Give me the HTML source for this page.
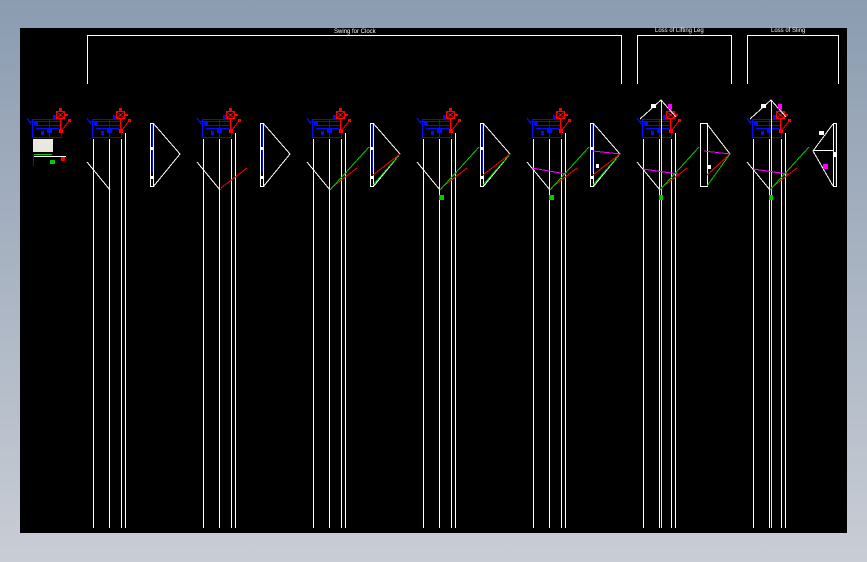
<!DOCTYPE html>
<html><head><meta charset="utf-8"><style>
html,body{margin:0;padding:0;width:867px;height:562px;overflow:hidden;background:linear-gradient(#8b9cb1,#c9cdd5);}
svg{position:absolute;left:0;top:0}
text{font-family:"Liberation Sans",sans-serif;font-size:6px;fill:#fff}
</style></head><body>
<svg width="867" height="562" viewBox="0 0 867 562" shape-rendering="crispEdges">
<rect x="20" y="28" width="827" height="505" fill="#000"/>
<g stroke="#fff" fill="none" stroke-width="1">
<polyline points="87.5,84 87.5,35.5 621.5,35.5 621.5,84"/>
<polyline points="637.5,84 637.5,35.5 731.5,35.5 731.5,84"/>
<polyline points="747.5,84 747.5,35.5 838.5,35.5 838.5,84"/>
</g>
<text x="334" y="33">Swing for Clock</text>
<text x="655" y="32">Loss of Lifting Leg</text>
<text x="771" y="32">Loss of Sling</text>

<defs>
<g id="hd">
<g stroke="#0010ff" fill="none">
<rect x="-0.5" y="119.5" width="29" height="18"/>
<line x1="-4" y1="121.5" x2="30" y2="121.5"/>
<line x1="2" y1="125.5" x2="28" y2="125.5"/>
<line x1="3" y1="128.5" x2="26" y2="128.5"/>
<line x1="16.5" y1="120" x2="16.5" y2="137"/>
<line x1="-6" y1="118" x2="-2" y2="124"/>
</g>
<rect x="1" y="122" width="4" height="3" fill="#0010ff"/>
<rect x="20" y="115" width="3" height="4" fill="#0010ff"/>
<rect x="14" y="129" width="5" height="4" fill="#0010ff"/>
<rect x="8" y="131" width="3" height="4" fill="#0010ff"/>
<g stroke="#f00" fill="none">
<rect x="23.5" y="111.5" width="8" height="7"/>
<line x1="24" y1="112" x2="31" y2="118"/><line x1="31" y1="112" x2="24" y2="118"/>
<line x1="27.5" y1="118" x2="27.5" y2="130"/>
<line x1="29" y1="130" x2="36" y2="121"/>
</g>
<rect x="26" y="108" width="3" height="3" fill="#f00"/>
<rect x="32" y="114" width="3" height="2" fill="#f00"/>
<rect x="35" y="119" width="3" height="3" fill="#f00"/>
<rect x="26" y="129" width="4" height="4" fill="#f00"/>
</g>
<g id="cols" stroke="#fff" fill="none">
<line x1="0.5" y1="139" x2="0.5" y2="528"/>
<line x1="16.5" y1="139" x2="16.5" y2="528"/>
<line x1="28.5" y1="139" x2="28.5" y2="528"/>
<line x1="32.5" y1="133" x2="32.5" y2="528"/>
<line x1="-6" y1="162" x2="17" y2="190"/>
</g>
<g id="tri">
<rect x="57.5" y="123.5" width="3" height="63" stroke="#fff" fill="none"/>
<line x1="59.5" y1="124" x2="59.5" y2="172" stroke="#0010ff"/>
<polyline points="60,123 87,154 60,187" stroke="#fff" fill="none"/>
<rect x="57" y="147" width="4" height="3" fill="#fff"/>
<rect x="57" y="176" width="3" height="3" fill="#fff"/>
</g>
</defs>

<g transform="translate(-60,0)"><use href="#hd" x="93"/></g>
<rect x="33" y="139" width="20" height="13" fill="#e8e8e0"/>
<line x1="33" y1="156.5" x2="66" y2="156.5" stroke="#fff"/>
<line x1="34" y1="154.5" x2="52" y2="154.5" stroke="#0c0"/>
<rect x="50" y="160" width="5" height="4" fill="#0c0"/>
<rect x="61" y="157" width="4" height="4" fill="#f00"/>
<line x1="33.5" y1="156" x2="33.5" y2="166" stroke="#0010ff"/>

<g transform="translate(93,0)"><use href="#hd"/><use href="#cols"/><use href="#tri"/></g>
<g transform="translate(203,0)"><use href="#hd"/><use href="#cols"/><use href="#tri"/>
<line x1="18" y1="188" x2="44" y2="168" stroke="#f00"/></g>
<g transform="translate(313,0)"><use href="#hd"/><use href="#cols"/><use href="#tri"/>
<line x1="18" y1="188" x2="44" y2="168" stroke="#f00"/>
<line x1="17" y1="190" x2="56" y2="147" stroke="#0c0"/>
<line x1="60" y1="185" x2="87" y2="154" stroke="#0c0"/><line x1="60" y1="175" x2="87" y2="154" stroke="#f00"/></g>
<g transform="translate(423,0)"><use href="#hd"/><use href="#cols"/><use href="#tri"/>
<line x1="18" y1="188" x2="44" y2="168" stroke="#f00"/>
<line x1="17" y1="190" x2="56" y2="147" stroke="#0c0"/>
<line x1="60" y1="185" x2="87" y2="154" stroke="#0c0"/><line x1="60" y1="175" x2="87" y2="154" stroke="#f00"/>
<rect x="16" y="195" width="5" height="5" fill="#0c0"/></g>
<g transform="translate(533,0)"><use href="#hd"/><use href="#cols"/><use href="#tri"/>
<line x1="18" y1="188" x2="44" y2="168" stroke="#f00"/>
<line x1="17" y1="190" x2="56" y2="147" stroke="#0c0"/>
<line x1="-1" y1="168" x2="33" y2="174" stroke="#f0f"/>
<line x1="60" y1="151" x2="87" y2="154" stroke="#f0f"/>
<line x1="60" y1="185" x2="87" y2="154" stroke="#0c0"/><line x1="60" y1="175" x2="87" y2="154" stroke="#f00"/>
<rect x="16" y="195" width="5" height="5" fill="#0c0"/>
<rect x="63" y="164" width="3" height="4" fill="#fff"/></g>

<g transform="translate(643,0)"><use href="#hd"/><use href="#cols"/>
<line x1="18.5" y1="100" x2="18.5" y2="528" stroke="#ff0"/>
<polyline points="-3,119 18,100 33,117" stroke="#fff" fill="none"/>
<rect x="8" y="104" width="5" height="4" fill="#fff"/>
<rect x="25" y="104" width="4" height="5" fill="#f0f"/>
<line x1="0" y1="169" x2="35" y2="174" stroke="#f0f"/>
<line x1="18" y1="188" x2="44" y2="168" stroke="#f00"/>
<line x1="17" y1="190" x2="56" y2="147" stroke="#0c0"/>
<rect x="16" y="195" width="4" height="5" fill="#0c0"/>
<rect x="57.5" y="123.5" width="7" height="63" stroke="#fff" fill="none"/>
<polyline points="64,124 87,154 64,186" stroke="#fff" fill="none"/>
<line x1="61" y1="151" x2="87" y2="154" stroke="#f0f"/>
<line x1="64" y1="175" x2="87" y2="154" stroke="#f00"/>
<line x1="64" y1="186" x2="87" y2="154" stroke="#0c0"/>
<rect x="64" y="165" width="4" height="4" fill="#fff"/>
</g>
<g transform="translate(753,0)"><use href="#hd"/><use href="#cols"/>
<line x1="18.5" y1="100" x2="18.5" y2="528" stroke="#ff0"/>
<polyline points="-3,119 18,100 33,117" stroke="#fff" fill="none"/>
<rect x="8" y="104" width="5" height="4" fill="#fff"/>
<rect x="25" y="104" width="4" height="5" fill="#f0f"/>
<line x1="0" y1="169" x2="35" y2="174" stroke="#f0f"/>
<line x1="18" y1="188" x2="44" y2="168" stroke="#f00"/>
<line x1="17" y1="190" x2="56" y2="147" stroke="#0c0"/>
<rect x="16" y="195" width="4" height="5" fill="#0c0"/>
<rect x="80.5" y="123.5" width="3" height="63" stroke="#fff" fill="none"/>
<line x1="82.5" y1="124" x2="82.5" y2="185" stroke="#0010ff"/>
<polyline points="80,124 60,151 80,186" stroke="#fff" fill="none"/>
<line x1="60" y1="150.5" x2="80" y2="150.5" stroke="#fff"/>
<rect x="66" y="131" width="5" height="4" fill="#fff"/>
<rect x="70" y="164" width="5" height="5" fill="#f0f"/>
<rect x="81" y="152" width="3" height="5" fill="#fff"/>
</g>
</svg>
</body></html>
